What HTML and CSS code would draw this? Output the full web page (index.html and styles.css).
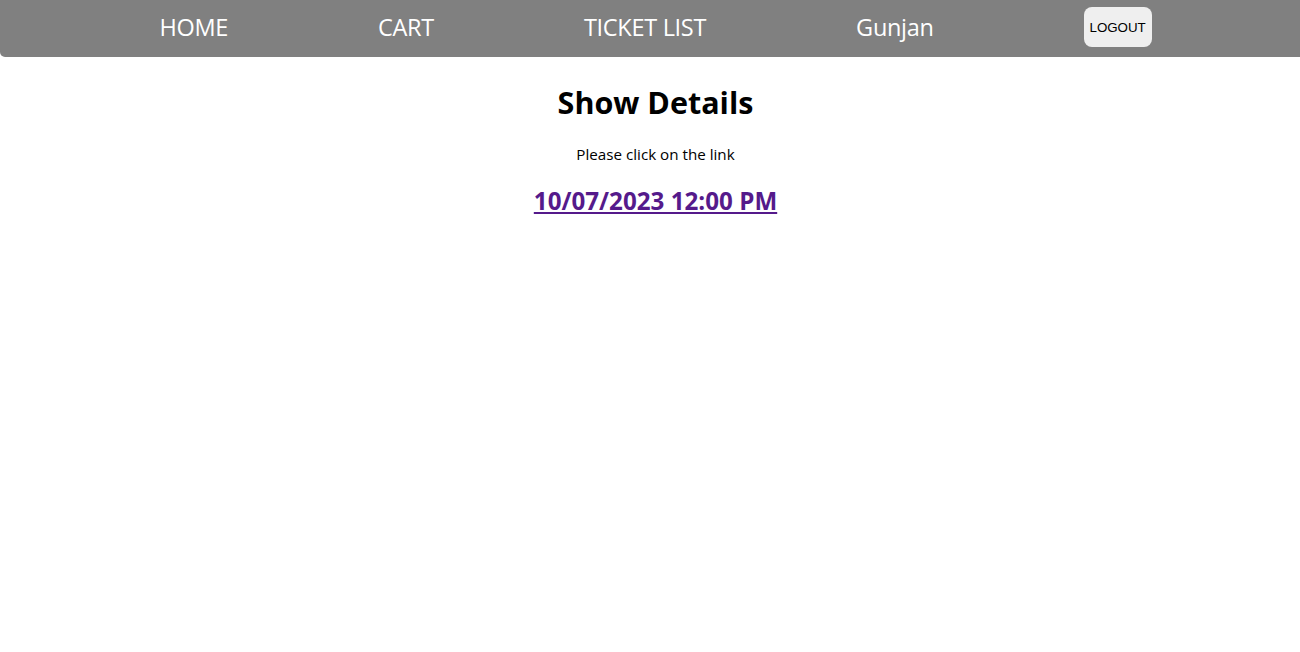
FILE: index.html
```html
<!DOCTYPE html>
<html lang="en">
<head>
<meta charset="utf-8">
<title>Show Details</title>
<link rel="stylesheet" href="styles.css">
</head>
<body>
<nav class="navbar">
  <a class="nav-link" href="#">HOME</a>
  <a class="nav-link" href="#">CART</a>
  <a class="nav-link" href="#">TICKET LIST</a>
  <span class="nav-link">Gunjan</span>
  <button class="logout" type="button">LOGOUT</button>
</nav>
<main class="content">
  <h1 class="title">Show Details</h1>
  <p class="hint">Please click on the link</p>
  <h2 class="show"><a class="show-link" href="#">10/07/2023 12:00 PM</a></h2>
</main>
</body>
</html>
```

FILE: styles.css
```css
html, body {
  margin: 0;
  padding: 0;
  background: #ffffff;
}

body {
  font-family: "Open Sans", "Noto Sans", sans-serif;
  color: #000000;
}

.navbar {
  display: flex;
  align-items: center;
  justify-content: center;
  gap: 150px;
  height: 57px;
  padding-left: 11px;
  padding-bottom: 3px;
  background: #808080;
  border-bottom-left-radius: 5px;
  box-sizing: border-box;
}

.nav-link {
  color: #ffffff;
  text-decoration: none;
  font-size: 23.5px;
  letter-spacing: -0.3px;
}

.logout {
  font-family: "Liberation Sans", Arial, sans-serif;
  font-size: 13.33px;
  color: #000000;
  background: #efefef;
  border: none;
  border-radius: 8px;
  width: 68px;
  height: 40px;
  padding: 0;
}

.content {
  text-align: center;
  padding-left: 11px;
}

.title {
  font-size: 30.5px;
  font-weight: 700;
  margin: 23px 0 19px;
  line-height: 44px;
}

.hint {
  font-size: 15.2px;
  margin: 0;
  line-height: 22px;
}

.show {
  font-size: 24.2px;
  font-weight: 700;
  margin: 20px 0 0;
  line-height: 32px;
}

.show-link {
  color: #551a8b;
  text-decoration: underline;
}
```
